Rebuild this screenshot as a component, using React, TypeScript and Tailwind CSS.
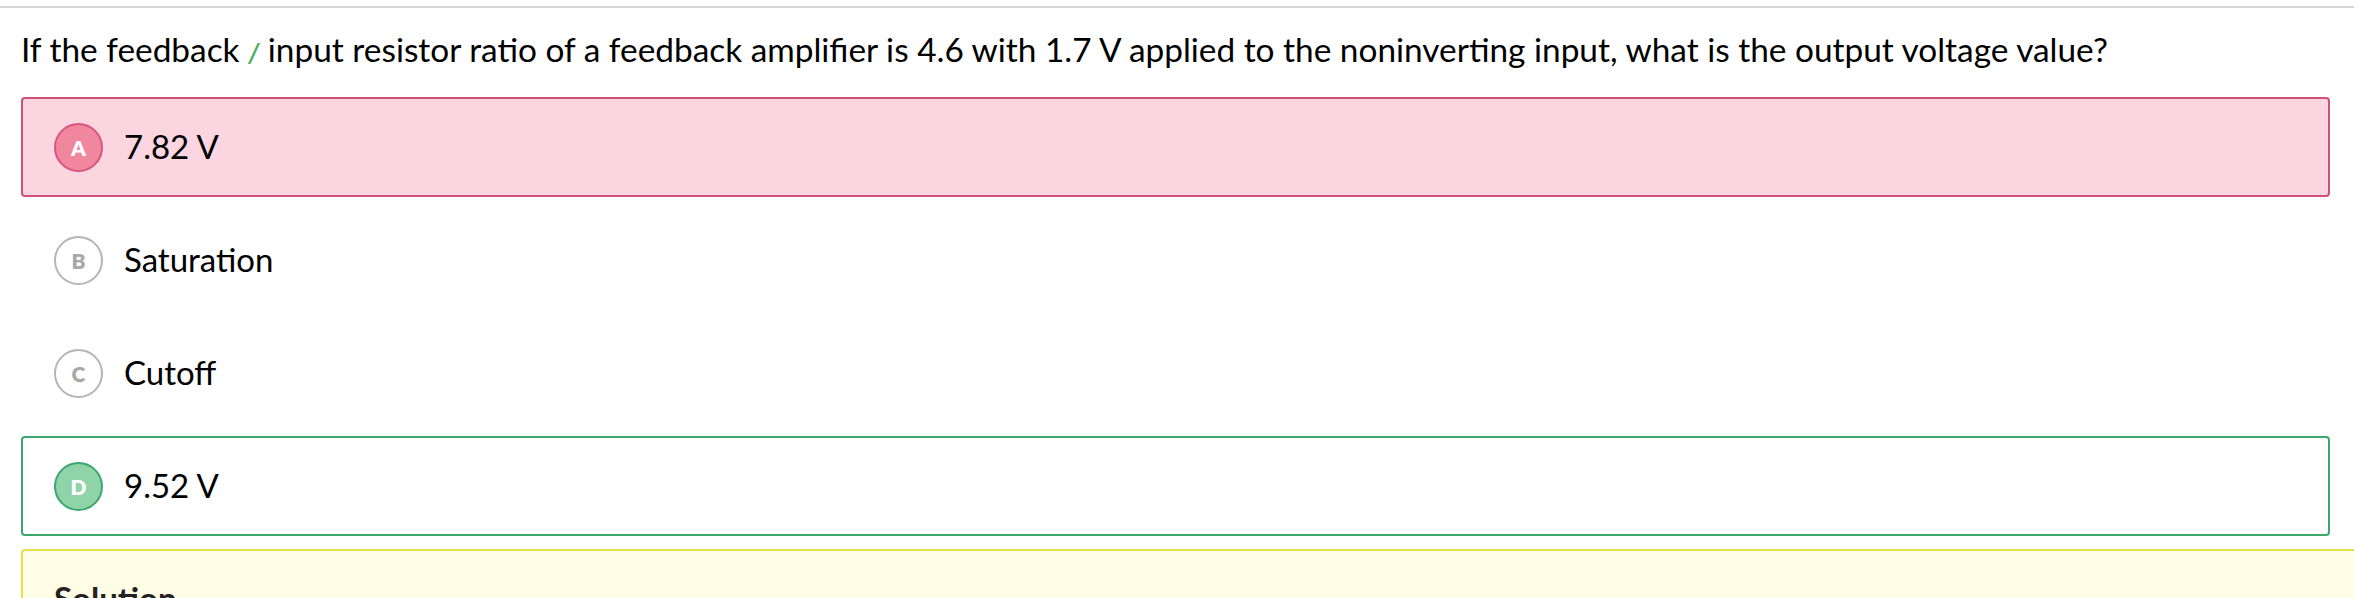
import React from "react";

type Opt = { letter: string; text: string; kind: "wrong" | "none" | "right" };

const options: Opt[] = [
  { letter: "A", text: "7.82 V", kind: "wrong" },
  { letter: "B", text: "Saturation", kind: "none" },
  { letter: "C", text: "Cutoff", kind: "none" },
  { letter: "D", text: "9.52 V", kind: "right" },
];

function Option({ o }: { o: Opt }) {
  const box =
    o.kind === "wrong"
      ? "border-[#cf5079] bg-[#fbd5e0]"
      : o.kind === "right"
      ? "border-[#3ba76c] bg-white"
      : "border-transparent bg-white";
  const circle =
    o.kind === "wrong"
      ? "border-[#d9557f] bg-[#f0879f] text-white"
      : o.kind === "right"
      ? "border-[#3ba76c] bg-[#8fd3a8] text-white"
      : "border-[#b5b5b5] bg-white text-[#a8a8a8]";
  return (
    <div
      className={`flex h-[100px] items-center rounded-[4px] border-2 pl-[31px] ${box}`}
    >
      <div
        className={`flex h-[49px] w-[49px] shrink-0 items-center justify-center rounded-full border-2 text-[21px] font-extrabold leading-none ${circle}`}
      >
        {o.letter}
      </div>
      <div className="ml-[21px] pb-[2px] text-[33px] leading-[38px] text-black">{o.text}</div>
    </div>
  );
}

export default function App() {
  return (
    <div
      className="h-[598px] w-[2354px] overflow-hidden bg-white pt-[6px]"
      style={{ fontFamily: "Lato, 'Open Sans', sans-serif" }}
    >
      <div className="h-[2px] w-full bg-[#d6d6d6]" />
      <div className="pl-[21px] pr-[24px]">
        <p className="mt-[22px] text-[33.4px] leading-[38px] text-black">
          If the feedback <span className="text-[26px] font-bold italic text-[#4fae5b]">/</span> input resistor ratio of a feedback amplifier is 4.6 with 1.7 V applied to the noninverting input, what is the output voltage value?
        </p>
        <div className="mt-[26px] flex flex-col gap-[13px]">
          {options.map((o) => (
            <Option key={o.letter} o={o} />
          ))}
        </div>
      </div>
      <div className="ml-[21px] mt-[13px] rounded-tl-[4px] border-l-2 border-t-2 border-[#e8e04a] bg-[#fffde6] px-[31px] pt-[28px]">
        <div className="text-[33px] font-bold leading-[38px] text-[#222]">Solution</div>
      </div>
    </div>
  );
}
